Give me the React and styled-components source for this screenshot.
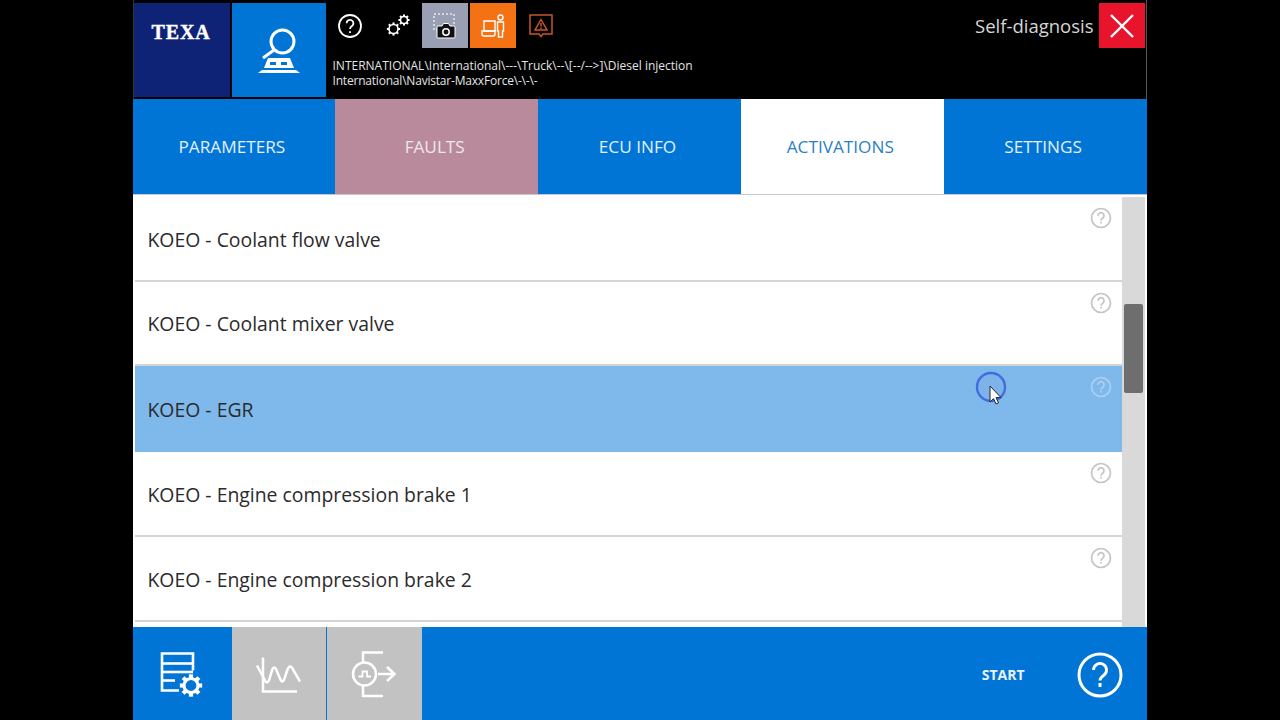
import React from "react";
import styled, { createGlobalStyle } from "styled-components";

const Global = createGlobalStyle`
  html, body { margin: 0; padding: 0; background: #000; }
  body { font-family: "Open Sans", "Noto Sans", sans-serif; overflow: hidden; }
`;

const Page = styled.div`
  position: relative;
  width: 1280px;
  height: 720px;
  background: #000;
  display: flex;
  justify-content: center;
`;

const Frame = styled.div`
  width: 1014px;
  margin-left: -1px;
  height: 720px;
  display: flex;
  flex-direction: column;
`;

const Header = styled.header`
  height: 99px;
  box-sizing: border-box;
  padding: 3px 1px 0 0;
  display: flex;
  border-left: 1px solid #333;
  border-right: 1px solid #555;
`;

const Tile = styled.div`
  width: ${(p) => p.$w || 94}px;
  height: 94px;
  margin-right: ${(p) => p.$gap || 0}px;
  background: ${(p) => p.$bg};
  display: flex;
  justify-content: center;
  align-items: ${(p) => (p.$top ? "flex-start" : "center")};
  flex-shrink: 0;
`;

const Logo = styled.span`
  font-family: "Liberation Serif", serif;
  font-weight: 700;
  font-size: 20px;
  letter-spacing: 0.9px;
  color: #fff;
  margin-top: 18px;
  margin-left: -1px;
  -webkit-text-stroke: 0.4px #fff;
`;

const Middle = styled.div`
  display: flex;
  flex-direction: column;
  margin-left: 6px;
`;

const Tools = styled.div`
  display: flex;
  height: 45px;
`;

const Tool = styled.div`
  width: ${(p) => p.$w || 46}px;
  height: 45px;
  margin-right: ${(p) => p.$gap || 0}px;
  background: ${(p) => p.$bg || "transparent"};
  display: flex;
  align-items: center;
  justify-content: center;
`;

const PathText = styled.div`
  margin-top: 10px;
  padding-left: 1px;
`;

const PathLine = styled.div`
  color: #e4e4e4;
  font-size: 12px;
  line-height: 15px;
  white-space: nowrap;
  letter-spacing: ${(p) => p.$spacing || 0}px;
`;

const Right = styled.div`
  margin-left: auto;
  display: flex;
  height: 45px;
  align-items: center;
`;

const Title = styled.span`
  color: #d6d6d6;
  font-size: 18.500px;
  margin-right: 5px;
`;

const Close = styled.div`
  width: 46px;
  height: 45px;
  background: #e8142c;
  display: flex;
  align-items: center;
  justify-content: center;
`;

const Tabs = styled.nav`
  height: 95px;
  display: grid;
  grid-template-columns: repeat(5, 1fr);
  background: #0075d6;
`;

const Tab = styled.div`
  display: flex;
  align-items: center;
  justify-content: center;
  padding-right: 4px;
  font-size: 17.200px;
  color: ${(p) => (p.$active ? "#2a7fc4" : p.$fault ? "#f0e6ea" : "#e4f0fb")};
  background: ${(p) => (p.$active ? "#fff" : p.$fault ? "#b88a9c" : "#0075d6")};
`;

const Body = styled.div`
  height: 433px;
  display: flex;
  background: #fff;
  border-top: 1px solid #c8c8c8;
  box-sizing: border-box;
  padding-right: 2px;
`;

const List = styled.div`
  flex: 1;
  overflow: hidden;
  padding: 2px 0 0 2px;
`;

const Row = styled.div`
  height: ${(p) => p.$h}px;
  box-sizing: border-box;
  position: relative;
  display: flex;
  align-items: center;
  padding: 1px 0 0 13px;
  font-size: 19.400px;
  color: #2b2b2b;
  background: ${(p) => (p.$selected ? "#7fb8ea" : "#fff")};
  border-bottom: ${(p) => (p.$selected ? "none" : "2px solid #d4d4d4")};
`;

const RowHelp = styled.svg`
  position: absolute;
  right: 10px;
  top: 10px;
  opacity: ${(p) => (p.$selected ? 0.35 : 1)};
`;

const Track = styled.div`
  width: 23px;
  margin-top: 2px;
  background: #d9d9d9;
  padding: 107px 2px 0 2px;
  box-sizing: border-box;
`;

const Thumb = styled.div`
  height: 89px;
  border-radius: 2px;
  background: #6e6e6e;
`;

const Footer = styled.footer`
  height: 93px;
  display: flex;
  align-items: stretch;
  background: #0075d6;
  padding-right: 24px;
`;

const FootTile = styled.div`
  width: ${(p) => p.$w}px;
  margin-right: ${(p) => p.$gap || 0}px;
  background: ${(p) => p.$bg || "transparent"};
  display: flex;
  align-items: center;
  justify-content: center;
`;

const Start = styled.span`
  margin: 2px 52px 0 auto;
  align-self: center;
  color: #e9f3fc;
  font-size: 14px;
  font-weight: 700;
`;

const FootHelp = styled.svg`
  align-self: center;
  margin-top: 2px;
`;

const Pointer = styled.svg`
  position: absolute;
  left: 974px;
  top: 371px;
`;

const items = [
  { label: "KOEO - Coolant flow valve", h: 85 },
  { label: "KOEO - Coolant mixer valve", h: 84 },
  { label: "KOEO - EGR", h: 86, selected: true },
  { label: "KOEO - Engine compression brake 1", h: 85 },
  { label: "KOEO - Engine compression brake 2", h: 85 },
];

const tabs = ["PARAMETERS", "FAULTS", "ECU INFO", "ACTIVATIONS", "SETTINGS"];

const Gear = ({ cx, cy, r, w = 2 }) => (
  <g fill="none" stroke="#fff" strokeWidth={w}>
    <circle cx={cx} cy={cy} r={r} />
    {[0, 45, 90, 135, 180, 225, 270, 315].map((a) => (
      <line
        key={a}
        x1={cx}
        y1={cy - r}
        x2={cx}
        y2={cy - r - w * 1.3}
        strokeWidth={w * 1.3}
        transform={`rotate(${a} ${cx} ${cy})`}
      />
    ))}
  </g>
);

export default function App() {
  return (
    <Page>
      <Global />
      <Frame>
        <Header>
          <Tile $w={96} $gap={2} $bg="#0f2376" $top>
            <Logo>TEXA</Logo>
          </Tile>
          <Tile $bg="#0075d6">
            <svg width="60" height="60" viewBox="0 0 60 60" fill="none" stroke="#fff">
              <circle cx="33.500" cy="21.500" r="11.500" strokeWidth="3" />
              <line x1="25" y1="30" x2="14" y2="38" strokeWidth="3" />
              <path d="M19 38h22l4 10H15z" fill="#fff" stroke="none" />
              <rect x="21" y="42" width="6" height="3" fill="#0075d6" stroke="none" />
              <rect x="32" y="42" width="6" height="3" fill="#0075d6" stroke="none" />
              <path d="M9 53l4-3h34l4 3z" fill="#fff" stroke="none" />
            </svg>
          </Tile>
          <Middle>
            <Tools>
              <Tool $w={36} $gap={12}>
                <svg width="26" height="26" viewBox="0 0 26 26" fill="none" stroke="#fff" strokeWidth="1.800">
                  <circle cx="13" cy="13" r="11" />
                  <path d="M9.600 10.200a3.400 3.400 0 1 1 5.400 2.800c-1.300.9-2 1.500-2 3" />
                  <line x1="13" y1="18.200" x2="13" y2="20" />
                </svg>
              </Tool>
              <Tool $w={36} $gap={6}>
                <svg width="28" height="28" viewBox="0 0 28 28">
                  <Gear cx={9.500} cy={17} r={4.500} w={1.600} />
                  <Gear cx={20} cy={8} r={3.500} w={1.600} />
                </svg>
              </Tool>
              <Tool $bg="#9a9fb4" $gap={2}>
                <svg width="26" height="28" viewBox="0 0 26 28">
                  <rect x="2" y="2" width="20" height="16" fill="none" stroke="#e6e8f0" strokeWidth="1.500" strokeDasharray="2 2" />
                  <path d="M6 14h4l1.500-2.500h5L18 14h4a1 1 0 0 1 1 1v10a1 1 0 0 1-1 1H6a1 1 0 0 1-1-1V15a1 1 0 0 1 1-1z" fill="#111" stroke="#fff" strokeWidth="1" />
                  <circle cx="14" cy="20" r="3.200" fill="none" stroke="#fff" strokeWidth="1.500" />
                </svg>
              </Tool>
              <Tool $bg="#f47214" $gap={2}>
                <svg width="26" height="28" viewBox="0 0 26 28" fill="none" stroke="#fff" strokeWidth="1.400">
                  <path d="M4 9h11v10H4z" />
                  <path d="M2 19h13v3a2 2 0 0 1-2 2H4a2 2 0 0 1-2-2z" />
                  <circle cx="20.500" cy="5.500" r="2.500" />
                  <path d="M17.500 10h6v9h-1v6h-4v-6h-1z" />
                </svg>
              </Tool>
              <Tool>
                <svg width="26" height="26" viewBox="0 0 26 26" fill="none" stroke="#c8552a" strokeWidth="1.500">
                  <path d="M2 2h22v19H15l-2 2.500L11 21H2z" />
                  <path d="M13 6.500L19 17H7z" />
                  <line x1="13" y1="10" x2="13" y2="13.500" />
                  <line x1="13" y1="14.500" x2="13" y2="16" />
                </svg>
              </Tool>
            </Tools>
            <PathText>
              <PathLine>INTERNATIONAL\International\---\Truck\--\[--/--&gt;]\Diesel injection</PathLine>
              <PathLine $spacing={-0.2}>International\Navistar-MaxxForce\-\-\-</PathLine>
            </PathText>
          </Middle>
          <Right>
            <Title>Self-diagnosis</Title>
            <Close>
              <svg width="26" height="26" viewBox="0 0 26 26" stroke="#fff" strokeWidth="2.400">
                <line x1="2" y1="2" x2="24" y2="24" />
                <line x1="24" y1="2" x2="2" y2="24" />
              </svg>
            </Close>
          </Right>
        </Header>

        <Tabs>
          {tabs.map((t) => (
            <Tab key={t} $active={t === "ACTIVATIONS"} $fault={t === "FAULTS"}>
              {t}
            </Tab>
          ))}
        </Tabs>

        <Body>
          <List>
            {items.map((item) => (
              <Row key={item.label} $h={item.h} $selected={item.selected}>
                {item.label}
                <RowHelp $selected={item.selected} width="22" height="22" viewBox="0 0 22 22" fill="none" stroke={item.selected ? "#fff" : "#c4c4c4"} strokeWidth="1.700">
                  <circle cx="11" cy="11" r="9.500" />
                  <path d="M8 8.700a3 3 0 1 1 4.700 2.500c-1.100.7-1.700 1.300-1.700 2.500" />
                  <line x1="11" y1="15" x2="11" y2="16.500" />
                </RowHelp>
              </Row>
            ))}
          </List>
          <Track>
            <Thumb />
          </Track>
        </Body>

        <Footer>
          <FootTile $w={98} $gap={1}>
            <svg width="48" height="48" viewBox="0 0 48 48" fill="none" stroke="#fff" strokeWidth="2.600">
              <path d="M21 40.500H4V3.500h31v17" />
              <line x1="4" y1="13.500" x2="35" y2="13.500" />
              <line x1="4" y1="22" x2="35" y2="22" />
              <line x1="4" y1="30.500" x2="17" y2="30.500" />
              <Gear cx={33} cy={35.500} r={7} w={3.200} />
            </svg>
          </FootTile>
          <FootTile $w={94} $gap={1} $bg="#c2c2c2">
            <svg width="48" height="40" viewBox="0 0 48 40" fill="none" stroke="#fff" strokeWidth="2.500">
              <path d="M8 3.500v34h34" />
              <path d="M2 11.500l8 15c1 2.500 2.500 2.500 4 0l3-10c1.500-4 3.500-4 5 1l3 7c1.500 4 3 4 4.500 0l3-9c1.500-4 4-4 5.500 0l7 12" />
            </svg>
          </FootTile>
          <FootTile $w={95} $bg="#c2c2c2">
            <svg width="48" height="48" viewBox="0 0 48 48" fill="none" stroke="#fff" strokeWidth="2.500">
              <circle cx="14.500" cy="24" r="11.500" />
              <path d="M8.500 26.500h4v-5h4.500v5h4" strokeWidth="1.800" />
              <path d="M33 2.500H13v10M33 46H13V36" />
              <path d="M28 24h16M37 17l7.500 7-7.500 7" />
            </svg>
          </FootTile>
          <Start>START</Start>
          <FootHelp width="46" height="46" viewBox="0 0 46 46" fill="none" stroke="#fff" strokeWidth="3">
            <circle cx="23" cy="23" r="21" />
            <path d="M16.500 18a6.500 6.500 0 1 1 10 5.500c-2.300 1.500-3.500 2.600-3.500 5" strokeWidth="2.800" />
            <line x1="23" y1="31" x2="23" y2="35" strokeWidth="3" />
          </FootHelp>
        </Footer>
      </Frame>

      <Pointer width="34" height="36" viewBox="0 0 34 36">
        <circle cx="17" cy="16" r="14" fill="#7fa8e8" fillOpacity="0.3" stroke="#3f6fdc" strokeWidth="2.400" />
        <path d="M16 15v16l3.500-3.400 2.500 5.400 2.500-1.200-2.500-5.200h5z" fill="#fff" stroke="#223" strokeWidth="1" />
      </Pointer>
    </Page>
  );
}
